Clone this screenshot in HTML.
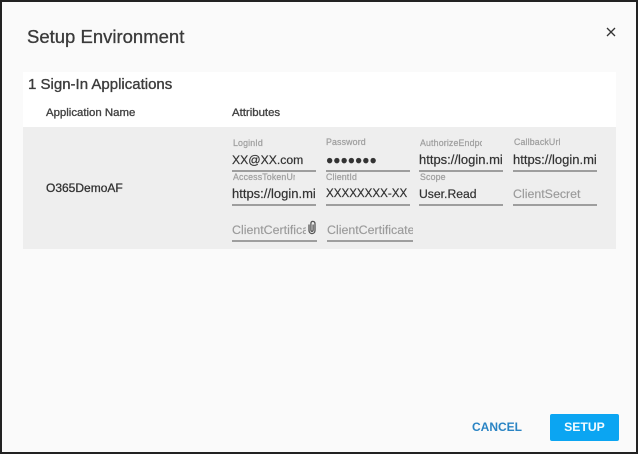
<!DOCTYPE html>
<html>
<head>
<meta charset="utf-8">
<style>
html,body{margin:0;padding:0;width:638px;height:454px;overflow:hidden;background:#fafafa;font-family:"Liberation Sans",Arial,sans-serif}
.frame{position:absolute;left:0;top:0;width:638px;height:454px;box-sizing:border-box;border:2px solid #222;pointer-events:none;z-index:5}
.a{position:absolute;white-space:nowrap}
.clip{overflow:hidden}
.lbl{font-size:8.8px;color:#a0a0a0;line-height:11px;letter-spacing:.15px;-webkit-text-stroke:.25px #a0a0a0}
.val{font-size:13px;color:#333;line-height:16px;-webkit-text-stroke:.2px #333}
.ph{font-size:12.4px;color:#9a9a9a;line-height:16px;-webkit-text-stroke:.15px #9a9a9a}
.ln{position:absolute;height:2px;background:#9e9e9e}
</style>
</head>
<body>
<div class="frame"></div>
<div class="a" style="left:27px;top:25px;font-size:18.5px;line-height:23px;color:#3a3a3a;-webkit-text-stroke:.3px #3a3a3a">Setup Environment</div>
<svg class="a" style="left:605px;top:26px" width="12" height="12" viewBox="0 0 12 12"><path d="M2 2L10 10M10 2L2 10" stroke="#333" stroke-width="1.3" fill="none"/></svg>

<div class="a" style="left:23px;top:72px;width:593px;height:55px;background:#fff"></div>
<div class="a" style="left:23px;top:127px;width:593px;height:122px;background:#eeeeee"></div>

<div class="a" style="left:28px;top:76px;font-size:15px;line-height:18px;color:#3c3c3c;-webkit-text-stroke:.35px #3c3c3c">1 Sign-In Applications</div>
<div class="a" style="left:46px;top:106px;font-size:11.4px;line-height:14px;color:#444;-webkit-text-stroke:.35px #444">Application Name</div>
<div class="a" style="left:232px;top:106px;font-size:11.4px;line-height:14px;color:#444;-webkit-text-stroke:.35px #444">Attributes</div>
<div class="a" style="left:46px;top:181px;font-size:12px;line-height:15px;color:#333;-webkit-text-stroke:.3px #333">O365DemoAF</div>

<div class="a clip lbl" style="left:233px;top:138px;width:84px">LoginId</div>
<div class="a clip val" style="left:232px;top:152px;width:84px;font-size:12.2px">XX@XX.com</div>
<div class="ln" style="left:232px;top:170px;width:84px"></div>

<div class="a clip lbl" style="left:326px;top:137px;width:84px">Password</div>
<div class="a clip val" style="left:326px;top:152px;width:84px;font-size:12px">●●●●●●●</div>
<div class="ln" style="left:326px;top:170px;width:84px"></div>

<div class="a clip lbl" style="left:420px;top:138px;width:62px">AuthorizeEndpoint</div>
<div class="a clip val" style="left:419px;top:152px;width:84px">https://login.microsoft</div>
<div class="ln" style="left:419px;top:170px;width:84px"></div>

<div class="a clip lbl" style="left:514px;top:137px;width:83px">CallbackUrl</div>
<div class="a clip val" style="left:513px;top:152px;width:84px">https://login.microsoft</div>
<div class="ln" style="left:513px;top:170px;width:84px"></div>

<div class="a clip lbl" style="left:233px;top:172px;width:62px">AccessTokenUr</div>
<div class="a clip val" style="left:232px;top:186px;width:84px">https://login.microsoft</div>
<div class="ln" style="left:232px;top:204px;width:84px"></div>

<div class="a clip lbl" style="left:326px;top:172px;width:84px">ClientId</div>
<div class="a clip val" style="left:326px;top:186px;width:84px;font-size:11.6px">XXXXXXXX-XX</div>
<div class="ln" style="left:326px;top:204px;width:84px"></div>

<div class="a clip lbl" style="left:420px;top:172px;width:84px">Scope</div>
<div class="a clip val" style="left:419px;top:186px;width:84px;font-size:12.2px">User.Read</div>
<div class="ln" style="left:419px;top:204px;width:84px"></div>

<div class="a clip ph" style="left:513px;top:186px;width:84px">ClientSecret</div>
<div class="ln" style="left:513px;top:204px;width:84px"></div>

<div class="a clip ph" style="left:232px;top:222px;width:74px">ClientCertificate</div>
<svg class="a" style="left:306px;top:220px" width="12" height="15" viewBox="0 0 12 15"><path d="M3 4.5V10.5C3 12.3 4.3 13.6 6 13.6S9 12.3 9 10.5V3.6C9 2.3 8.1 1.4 6.9 1.4S4.9 2.3 4.9 3.6V10C4.9 10.8 5.4 11.3 6 11.3S7.1 10.8 7.1 10V4.5" stroke="#555" stroke-width="1.3" fill="none"/></svg>
<div class="ln" style="left:232px;top:240px;width:85px"></div>

<div class="a clip ph" style="left:327px;top:222px;width:86px">ClientCertificate</div>
<div class="ln" style="left:327px;top:240px;width:86px"></div>

<div class="a" style="left:472px;top:420px;font-size:12px;line-height:15px;font-weight:bold;color:#2a84c4">CANCEL</div>
<div class="a" style="left:550px;top:414px;width:69px;height:27px;background:#0ba5f2;border-radius:2px;color:#f4fbff;font-size:12.2px;font-weight:bold;line-height:27px;text-align:center">SETUP</div>
</body>
</html>
